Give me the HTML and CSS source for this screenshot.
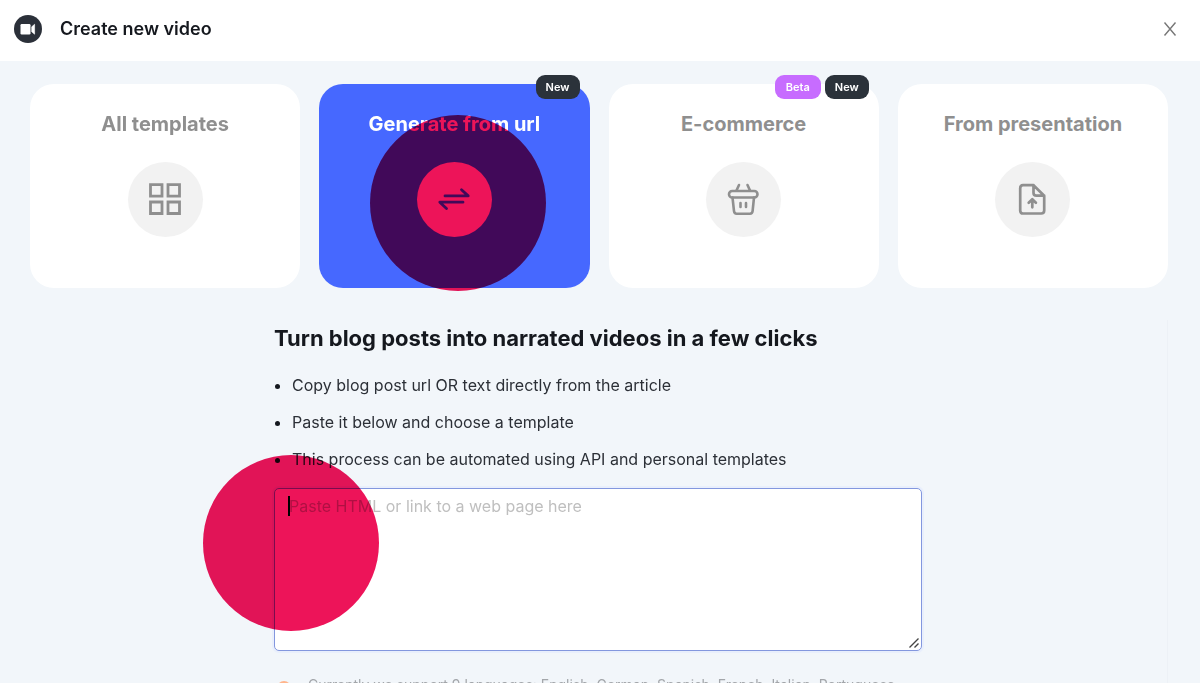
FILE: index.html
```html
<!DOCTYPE html>
<html lang="en">
<head>
<meta charset="utf-8">
<meta name="viewport" content="width=device-width, initial-scale=1">
<title>Create new video</title>
<link rel="stylesheet" href="styles.css">
</head>
<body>
<header class="topbar">
  <svg class="logo" viewBox="0 0 28 28" aria-hidden="true">
    <circle cx="14" cy="14" r="14" fill="#2b3039"/>
    <rect x="6.5" y="9" width="10" height="10.5" rx="1.2" fill="#fff"/>
    <path d="M17.7 11.8 20.6 9.3V19.2L17.7 16.8Z" fill="#fff" stroke="#fff" stroke-width=".6" stroke-linejoin="round"/>
  </svg>
  <h1 class="topbar-title">Create new video</h1>
  <button class="close" type="button" aria-label="Close">
    <svg viewBox="0 0 14 14" aria-hidden="true"><path d="M1.5 .5 12.5 13.5M12.5 .5 1.5 13.5" fill="none" stroke="#777" stroke-width="1.4"/></svg>
  </button>
</header>
<main class="content">
  <nav class="cards" aria-label="Video source">
    <button class="card" type="button">
      <span class="card-title">All templates</span>
      <span class="card-icon">
        <svg viewBox="0 0 32 32" aria-hidden="true"><path d="M1.5 .7h11.5v11.5h-11.5zM19 .7h11.5v11.5h-11.5zM1.5 18h11.5v11.5h-11.5zM19 18h11.5v11.5h-11.5z" fill="none" stroke="#8f8f8f" stroke-width="2.8"/></svg>
      </span>
    </button>
    <button class="card card-active" type="button" aria-pressed="true">
      <span class="card-title">Generate from url</span>
      <span class="card-icon">
        <svg viewBox="0 0 32 32" aria-hidden="true"><path d="M7 11.9H30.2L23.5 5.7M25 18.2H1.8L8.5 24.5" fill="none" stroke="#4668ff" stroke-width="2.8" stroke-linecap="round" stroke-linejoin="round"/></svg>
      </span>
      <span class="badges"><span class="badge">New</span></span>
      <span class="marker marker-card"></span>
    </button>
    <button class="card" type="button">
      <span class="card-title">E-commerce</span>
      <span class="card-icon">
        <svg viewBox="0 0 32 32" aria-hidden="true"><g fill="none" stroke="#8f8f8f" stroke-width="2.6" stroke-linecap="round" stroke-linejoin="round"><rect x="1" y="7" width="28.5" height="6.5" rx="3.2"/><path d="M4.5 13.5 6 27.2Q6.3 29.7 8.6 29.7H22Q24.3 29.7 24.6 27.2L26 13.5M8.5 6.5 11 1M22 6.5 19.5 1M12.5 19v4M18 19v4"/></g></svg>
      </span>
      <span class="badges"><span class="badge badge-beta">Beta</span><span class="badge">New</span></span>
    </button>
    <button class="card" type="button">
      <span class="card-title">From presentation</span>
      <span class="card-icon">
        <svg viewBox="0 0 32 32" aria-hidden="true"><g fill="none" stroke="#8f8f8f" stroke-width="2.7" stroke-linecap="round" stroke-linejoin="round"><path d="M6 1.2H16.5L27.2 11.7V26.5Q27.2 29.5 24.2 29.5H6Q3.2 29.5 3.2 26.5V4.2Q3.2 1.2 6 1.2ZM16.5 1.2V8.7Q16.5 11.7 19.5 11.7H27.2M15.3 23.3V16M11.7 18.7 15.3 15.2 18.9 18.7"/></g></svg>
      </span>
    </button>
  </nav>
  <section class="panel">
    <div class="form">
      <h2 class="form-title">Turn blog posts into narrated videos in a few clicks</h2>
      <ul class="steps">
        <li>Copy blog post url OR text directly from the article</li>
        <li>Paste it below and choose a template</li>
        <li>This process can be automated using API and personal templates</li>
      </ul>
      <div class="field">
        <textarea class="source" aria-label="HTML or link" placeholder="Paste HTML or link to a web page here"></textarea>
        <svg class="grip" viewBox="0 0 12 12" aria-hidden="true"><path d="M1.5 10.5 10.5 1.5M6.5 10.5 10.5 6.5" fill="none" stroke="#444" stroke-width="1.4"/></svg>
        <span class="caret"></span>
        <span class="marker marker-field"></span>
      </div>
      <p class="note">
        <svg class="note-icon" viewBox="0 0 20 20" aria-hidden="true"><circle cx="10" cy="13" r="7" fill="#ffb58c"/></svg>
        <span>Currently we support 9 languages: English, German, Spanish, French, Italian, Portuguese</span>
      </p>
    </div>
  </section>
</main>
</body>
</html>
```

FILE: styles.css
```css
* { box-sizing: border-box; }

body {
  margin: 0;
  height: 100vh;
  overflow: hidden;
  display: flex;
  flex-direction: column;
  background: #f2f6fa;
  color: #15181e;
  font-family: Inter, "Liberation Sans", sans-serif;
}

button { font: inherit; border: 0; cursor: pointer; }

.topbar {
  display: flex;
  align-items: center;
  gap: 18px;
  flex: none;
  padding: 15px 20px 18px 14px;
  background: #fff;
}
.logo { width: 28px; height: 28px; }
.topbar-title {
  flex: 1;
  margin: 0;
  font-size: 18px;
  line-height: 28px;
  font-weight: 600;
}
.close {
  display: flex;
  padding: 3px;
  background: none;
}
.close svg { width: 14px; height: 14px; }

.content {
  flex: 1;
  min-height: 0;
  display: flex;
  flex-direction: column;
  gap: 32px;
  padding: 23px 32px 0 30px;
}

.cards {
  display: grid;
  grid-template-columns: repeat(4, 1fr);
  gap: 19px;
}
.card {
  position: relative;
  display: flex;
  flex-direction: column;
  align-items: center;
  gap: 24px;
  padding: 26px 12px 51px;
  border-radius: 24px;
  background: #fff;
  color: #8f8f8f;
}
.card-active { background: #4668ff; color: #fff; }
.card-title {
  font-size: 20px;
  line-height: 28px;
  font-weight: 700;
  white-space: nowrap;
}
.card-icon {
  display: flex;
  align-items: center;
  justify-content: center;
  width: 75px;
  height: 75px;
  border-radius: 50%;
  background: #f2f2f2;
}
.card-active .card-icon { background: #fff; }
.card-icon svg { width: 32px; height: 32px; overflow: visible; }

.badges {
  position: absolute;
  top: -9px;
  right: 10px;
  display: flex;
  gap: 4px;
}
.badge {
  padding: 0 10px;
  border-radius: 9px;
  background: #2b323a;
  color: #fff;
  font-size: 11px;
  line-height: 24px;
  font-weight: 600;
}
.badge-beta { padding: 0 11px; background: #c76cff; }

.marker {
  position: absolute;
  width: 176px;
  height: 176px;
  border-radius: 50%;
  background: #ed1459;
  mix-blend-mode: multiply;
  pointer-events: none;
}
.marker-card { top: 31px; left: 51px; }
.marker-field { top: -28px; left: -71px; }

.panel {
  flex: 1;
  min-height: 0;
  padding-right: 1px;
  border-right: 1px solid #edf1f6;
}
.form { max-width: 648px; margin: 0 auto; }
.form-title {
  margin: 0 0 16px;
  font-size: 22px;
  line-height: 36px;
  font-weight: 700;
}
.steps {
  margin: 0;
  padding-left: 18px;
  font-size: 16px;
  line-height: 27px;
  color: #2c3037;
}
.steps li { margin-bottom: 10px; }
.steps li::marker { color: #15181e; }

.field { position: relative; padding-top: 5px; }
.source {
  display: block;
  width: 100%;
  height: 163px;
  padding: 4px 14px;
  border: 1px solid #8397de;
  border-radius: 5px;
  outline: 0;
  box-shadow: 0 0 0 2px #e9effc;
  background: #fff;
  font: 16px/26px Inter, "Liberation Sans", sans-serif;
  resize: both;
}
.source::placeholder { color: #bfbfbf; }
.source::-webkit-resizer { background: transparent; }
.grip {
  position: absolute;
  right: 2px;
  bottom: 2px;
  width: 12px;
  height: 12px;
  pointer-events: none;
}
.caret {
  position: absolute;
  top: 13px;
  left: 14px;
  width: 2px;
  height: 20px;
  background: #000;
}

.note {
  display: flex;
  align-items: center;
  gap: 14px;
  margin: 24px 0 0;
  font-size: 14px;
  line-height: 20px;
  color: #a3a6aa;
  white-space: nowrap;
}
.note-icon { flex: none; width: 20px; height: 20px; }
```
